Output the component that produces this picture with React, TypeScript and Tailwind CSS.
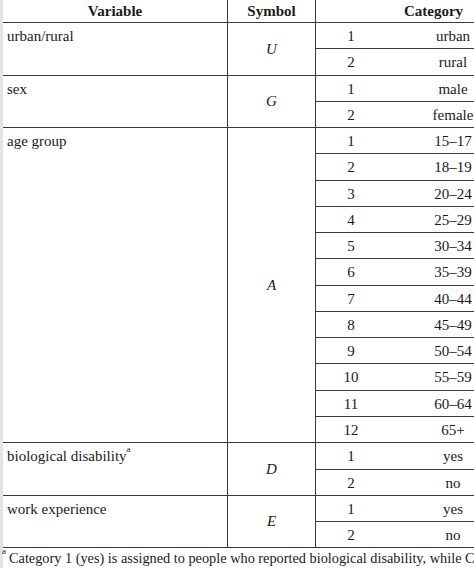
import React from "react";

type Group = {
  label: string;
  sup?: string;
  symbol: string;
  cats: string[];
};

const groups: Group[] = [
  { label: "urban/rural", symbol: "U", cats: ["urban", "rural"] },
  { label: "sex", symbol: "G", cats: ["male", "female"] },
  {
    label: "age group",
    symbol: "A",
    cats: [
      "15–17",
      "18–19",
      "20–24",
      "25–29",
      "30–34",
      "35–39",
      "40–44",
      "45–49",
      "50–54",
      "55–59",
      "60–64",
      "65+",
    ],
  },
  { label: "biological disability", sup: "a", symbol: "D", cats: ["yes", "no"] },
  { label: "work experience", symbol: "E", cats: ["yes", "no"] },
];

export default function App() {
  return (
    <div
      className="w-[474px] h-[568px] overflow-hidden bg-white text-[#1a1a1a] flex"
      style={{ fontFamily: '"Liberation Serif", "Times New Roman", serif' }}
    >
      {/* thin grey strip on the left edge */}
      <div className="w-[3px] shrink-0 bg-[#e4e4e4]" />

      <div className="w-[560px] shrink-0 text-[15px]">
        {/* header */}
        <div className="flex h-[23px] border-b border-[#3a3a3a] font-bold leading-[22px]">
          <div className="w-[225px] shrink-0 border-r border-[#3a3a3a] text-center">Variable</div>
          <div className="w-[88px] shrink-0 border-r border-[#3a3a3a] text-center">Symbol</div>
          <div className="w-[235px] shrink-0 text-center">Category</div>
        </div>

        {groups.map((g) => (
          <div key={g.label} className="flex border-b border-[#3a3a3a]">
            <div className="w-[225px] shrink-0 border-r border-[#3a3a3a] pl-[4px] pt-[1px] leading-[25px]">
              {g.label}
              {g.sup && <sup className="text-[9px] align-[5px]">{g.sup}</sup>}
            </div>
            <div className="w-[88px] shrink-0 border-r border-[#3a3a3a] flex items-center justify-center italic">
              {g.symbol}
            </div>
            <div className="flex flex-col">
              {g.cats.map((c, i) => (
                <div
                  key={c}
                  className={
                    i < g.cats.length - 1
                      ? "flex h-[26.28px] border-b border-[#3a3a3a] pt-[1px] leading-[25px]"
                      : "flex h-[25.28px] pt-[1px] leading-[24px]"
                  }
                >
                  <div className="w-[70px] text-center">{i + 1}</div>
                  <div className="w-[134px] text-center">{c}</div>
                </div>
              ))}
            </div>
          </div>
        ))}

        {/* footnote */}
        <div className="-ml-[1px] pt-[2px] text-[14.3px] leading-[17px] whitespace-nowrap">
          <sup className="text-[9px] align-[5px] mr-[3px]">a</sup>
          Category 1 (yes) is assigned to people who reported biological disability, while Category 2 (no) is assigned to others.
        </div>
      </div>
    </div>
  );
}
